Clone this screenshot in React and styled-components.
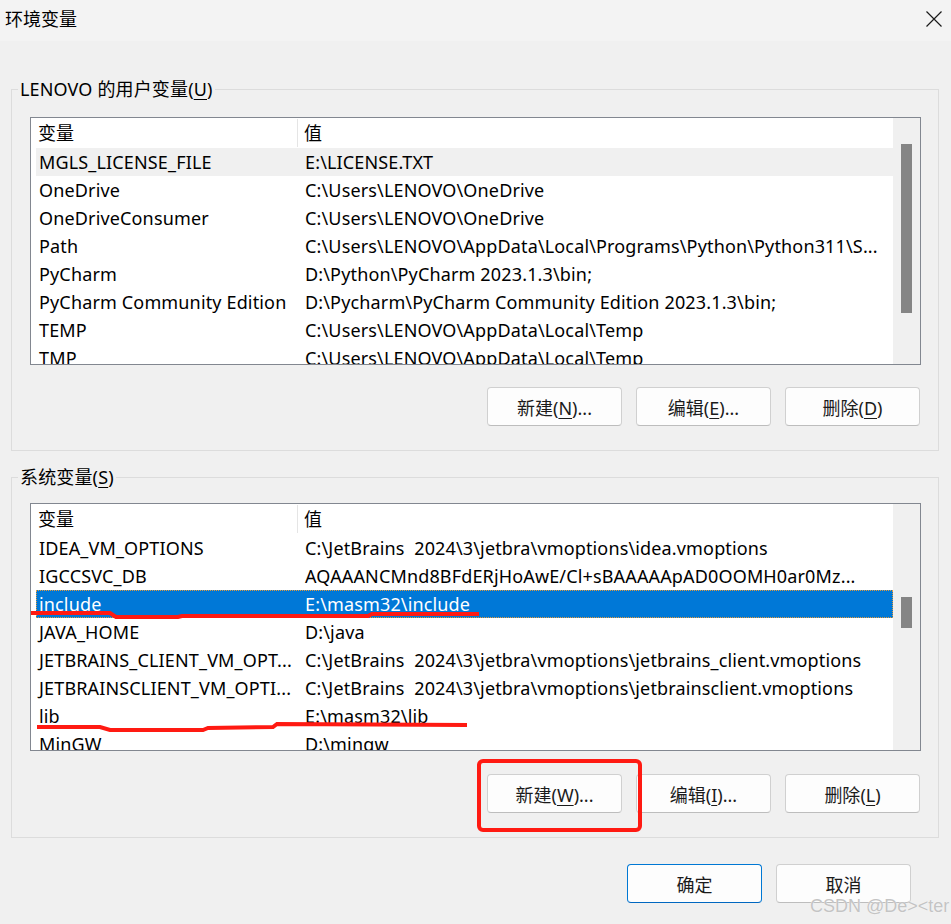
import styled, { createGlobalStyle } from "styled-components";

const GlobalStyle = createGlobalStyle`
  html, body {
    margin: 0;
    padding: 0;
    background: #f0f0f0;
  }
  body {
    font-family: "Noto Sans", "Noto Sans CJK SC", sans-serif;
    color: #000;
  }
`;

const userVars = [
  ["MGLS_LICENSE_FILE", "E:\\LICENSE.TXT", "hover"],
  ["OneDrive", "C:\\Users\\LENOVO\\OneDrive"],
  ["OneDriveConsumer", "C:\\Users\\LENOVO\\OneDrive"],
  ["Path", "C:\\Users\\LENOVO\\AppData\\Local\\Programs\\Python\\Python311\\S..."],
  ["PyCharm", "D:\\Python\\PyCharm 2023.1.3\\bin;"],
  ["PyCharm Community Edition", "D:\\Pycharm\\PyCharm Community Edition 2023.1.3\\bin;"],
  ["TEMP", "C:\\Users\\LENOVO\\AppData\\Local\\Temp"],
  ["TMP", "C:\\Users\\LENOVO\\AppData\\Local\\Temp"],
];

const sysVars = [
  ["IDEA_VM_OPTIONS", "C:\\JetBrains  2024\\3\\jetbra\\vmoptions\\idea.vmoptions"],
  ["IGCCSVC_DB", "AQAAANCMnd8BFdERjHoAwE/Cl+sBAAAAApAD0OOMH0ar0Mz..."],
  ["include", "E:\\masm32\\include", "selected"],
  ["JAVA_HOME", "D:\\java"],
  ["JETBRAINS_CLIENT_VM_OPT...", "C:\\JetBrains  2024\\3\\jetbra\\vmoptions\\jetbrains_client.vmoptions"],
  ["JETBRAINSCLIENT_VM_OPTI...", "C:\\JetBrains  2024\\3\\jetbra\\vmoptions\\jetbrainsclient.vmoptions"],
  ["lib", "E:\\masm32\\lib"],
  ["MinGW", "D:\\mingw"],
];

const Label = ({ text, mn }) => (
  <>
    {text}(<u>{mn}</u>)
  </>
);

const VarList = ({ rows, thumbTop, thumbHeight }) => (
  <List>
    <Rows>
      <Header>
        <HeadCell $divider>变量</HeadCell>
        <HeadCell>值</HeadCell>
      </Header>
      {rows.map(([name, value, state]) => (
        <Row key={name} $state={state}>
          <Cell>{name}</Cell>
          <Cell>{value}</Cell>
        </Row>
      ))}
    </Rows>
    <Track>
      <Thumb style={{ marginTop: thumbTop, height: thumbHeight }} />
    </Track>
  </List>
);

export default function App() {
  return (
    <Window>
      <GlobalStyle />
      <TitleBar>
        <Title>环境变量</Title>
        <svg width="16" height="16" viewBox="0 0 16 16">
          <path d="M0.5 0.5 L15.5 15.5 M15.5 0.5 L0.5 15.5" stroke="#1a1a1a" strokeWidth="1.2" />
        </svg>
      </TitleBar>

      <Body>
        <Group>
          <Legend>
            LENOVO 的用户变量(<u>U</u>)
          </Legend>
          <GroupInner $top={16} $gap={22}>
            <VarList rows={userVars} thumbTop={26} thumbHeight={169} />
            <ButtonRow>
              <Button>
                <Label text="新建" mn="N" />...
              </Button>
              <Button>
                <Label text="编辑" mn="E" />...
              </Button>
              <Button>
                <Label text="删除" mn="D" />
              </Button>
            </ButtonRow>
          </GroupInner>
        </Group>

        <Group>
          <Legend>
            系统变量(<u>S</u>)
          </Legend>
          <GroupInner $top={14} $gap={23}>
            <VarList rows={sysVars} thumbTop={93} thumbHeight={31} />
            <ButtonRow>
              <Button>
                <Label text="新建" mn="W" />...
              </Button>
              <Button>
                <Label text="编辑" mn="I" />...
              </Button>
              <Button>
                <Label text="删除" mn="L" />
              </Button>
            </ButtonRow>
          </GroupInner>
        </Group>

        <Footer>
          <Button $primary>确定</Button>
          <Button>取消</Button>
        </Footer>
      </Body>

      <Marks width="951" height="924" viewBox="0 0 951 924">
        <polyline
          points="31,613 110,613 116,617 178,617 182,616 368,616 372,614 479,614"
          fill="none"
          stroke="#ff1a12"
          strokeWidth="4"
        />
        <polyline
          points="37,727 100,727 110,730 203,730 208,728 273,727 277,724 467,725"
          fill="none"
          stroke="#ff1a12"
          strokeWidth="4"
        />
        <rect x="479" y="761" width="161" height="69" rx="4" fill="none" stroke="#ff1a12" strokeWidth="4" />
      </Marks>

      <Watermark>CSDN @De&gt;&lt;ter</Watermark>
    </Window>
  );
}

const Window = styled.div`
  position: relative;
  width: 951px;
  height: 924px;
  overflow: hidden;
  background: #f0f0f0;
  display: flex;
  flex-direction: column;
`;

const TitleBar = styled.div`
  height: 41px;
  flex-shrink: 0;
  box-sizing: border-box;
  background: #f3f3f3;
  display: flex;
  align-items: center;
  justify-content: space-between;
  padding: 0 9px 3px 5px;
`;

const Title = styled.span`
  font-size: 18px;
  line-height: 1;
  color: #000;
`;

const Body = styled.div`
  padding: 36px 12px 0 11px;
  display: flex;
  flex-direction: column;
  gap: 14px;
`;

const Group = styled.fieldset`
  margin: 0;
  padding: 0;
  min-width: 0;
  border: 1px solid #dcdcdc;
`;

const Legend = styled.legend`
  margin-left: 6px;
  padding: 0 2px;
  font-size: 18px;
  line-height: 24px;
  letter-spacing: 0.15px;
  u {
    text-underline-offset: 3px;
  }
`;

const GroupInner = styled.div`
  display: flex;
  flex-direction: column;
  gap: ${(p) => p.$gap}px;
  padding: ${(p) => p.$top}px 17px 24px 18px;
`;

const List = styled.div`
  height: 248px;
  box-sizing: border-box;
  border: 1px solid #828790;
  background: #fff;
  display: grid;
  grid-template-columns: 1fr 27px;
  overflow: hidden;
`;

const Rows = styled.div`
  padding-left: 5px;
  overflow: hidden;
  font-size: 18px;
`;

const Header = styled.div`
  display: grid;
  grid-template-columns: 262px 1fr;
  height: 30px;
  align-items: center;
`;

const HeadCell = styled.div`
  padding-left: 2px;
  line-height: 28px;
  height: 28px;
  border-right: ${(p) => (p.$divider ? "1px solid #e5e5e5" : "none")};
  ${(p) => !p.$divider && "padding-left: 6px;"}
`;

const Row = styled.div`
  display: grid;
  grid-template-columns: 266px 1fr;
  height: 28px;
  line-height: 28px;
  box-sizing: border-box;
  letter-spacing: 0.15px;
  background: ${(p) =>
    p.$state === "selected" ? "#0078d7" : p.$state === "hover" ? "#f0f0f0" : "transparent"};
  color: ${(p) => (p.$state === "selected" ? "#fff" : "#000")};
  outline: ${(p) => (p.$state === "selected" ? "1px dotted #e39a3c" : "none")};
  outline-offset: -1px;
`;

const Cell = styled.div`
  padding-left: 3px;
  white-space: pre;
  overflow: hidden;
`;

const Track = styled.div`
  background: #f0f0f0;
  display: flex;
  flex-direction: column;
  padding-left: 8px;
`;

const Thumb = styled.div`
  width: 11px;
  background: #858585;
`;

const ButtonRow = styled.div`
  display: flex;
  justify-content: flex-end;
  gap: 14px;
  padding-right: 1px;
`;

const Button = styled.button`
  width: 135px;
  height: 39px;
  box-sizing: border-box;
  border-radius: 4px;
  border: 1px solid ${(p) => (p.$primary ? "#0078d4" : "#d0d0d0")};
  border-bottom-color: ${(p) => (p.$primary ? "#0067c0" : "#bdbdbd")};
  background: #fdfdfd;
  font-family: "Noto Sans", "Noto Sans CJK SC", sans-serif;
  font-size: 18px;
  color: #1b1b1b;
  padding: 0;
  u {
    text-underline-offset: 3px;
  }
`;

const Footer = styled.div`
  display: flex;
  justify-content: flex-end;
  gap: 14px;
  margin-top: 12px;
  padding-right: 28px;
`;

const Marks = styled.svg`
  position: absolute;
  left: 0;
  top: 0;
  pointer-events: none;
`;

const Watermark = styled.div`
  position: absolute;
  left: 810px;
  top: 895px;
  font-family: "Liberation Sans", Arial, sans-serif;
  font-size: 18px;
  line-height: 22px;
  color: #c4c4c4;
  text-shadow: 0 0 1px #fff;
  white-space: nowrap;
`;
